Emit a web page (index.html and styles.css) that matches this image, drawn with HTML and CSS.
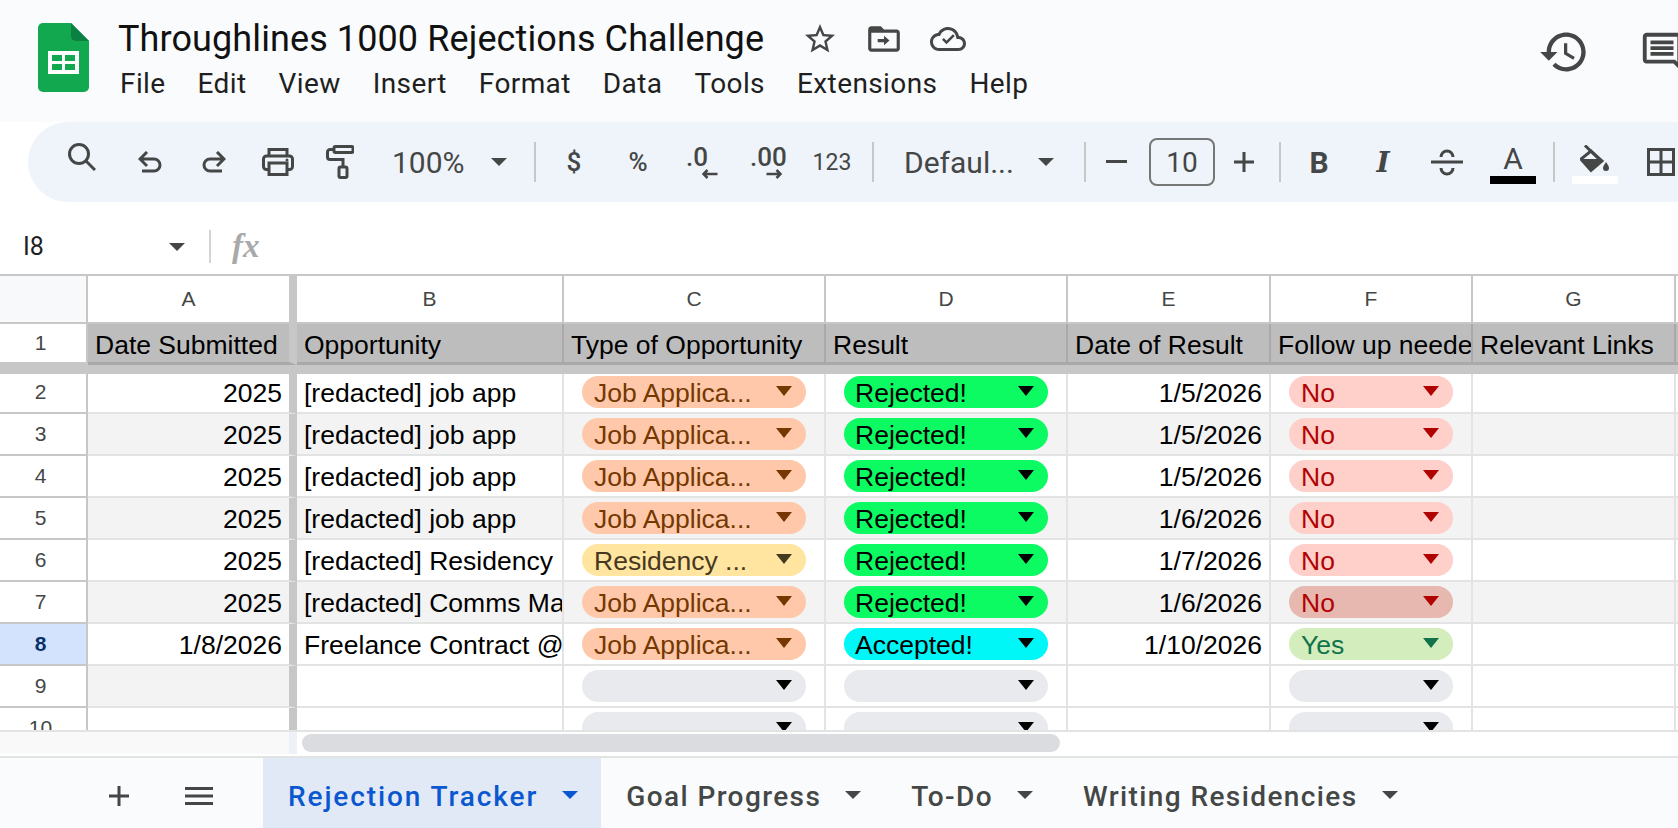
FILE: index.html
```html
<!DOCTYPE html>
<html lang="en">
<head>
    <meta charset="UTF-8">
    <title>Throughlines 1000 Rejections Challenge</title>
    <link rel="stylesheet" href="styles.css">
</head>
<body>
    <header class="topbar">
        <svg class="logo" viewBox="0 0 51 69">
            <path d="M5 0H33L51 18V64a5 5 0 0 1-5 5H5a5 5 0 0 1-5-5V5a5 5 0 0 1 5-5z" fill="#12a84f"/>
            <path d="M33 0V13a5 5 0 0 0 5 5H51z" fill="#0b8043"/>
            <path d="M10 28H41V51H10z" fill="#fff"/>
            <path d="M14 32H24V38H14zM27 32H37V38H27zM14 41H24V47H14zM27 41H37V47H27z" fill="#12a84f"/>
        </svg>
        <div class="doc">
            <div class="doc-title">
                <h1>Throughlines 1000 Rejections Challenge</h1>
                <svg class="star" viewBox="0 0 24 24"><path d="M22 9.24l-7.19-.62L12 2 9.19 8.63 2 9.24l5.46 4.73L5.82 21 12 17.27 18.18 21l-1.63-7.03L22 9.24zM12 15.4l-3.76 2.27 1-4.28-3.32-2.88 4.38-.38L12 6.1l1.71 4.04 4.38.38-3.32 2.88 1 4.28L12 15.4z"/></svg>
                <svg class="move" viewBox="0 0 24 24"><path d="M20 6h-8l-2-2H4c-1.1 0-2 .9-2 2v12c0 1.1.9 2 2 2h16c1.1 0 2-.9 2-2V8c0-1.1-.9-2-2-2zm0 12H4V8h16v10zm-8-2v-2H8v-2h4v-2l3.5 3z"/></svg>
                <svg class="cloud" viewBox="0 0 24 24"><path d="M19.35 10.04C18.67 6.59 15.64 4 12 4 9.11 4 6.6 5.64 5.35 8.04 2.34 8.36 0 10.91 0 14c0 3.31 2.69 6 6 6h13c2.76 0 5-2.24 5-5 0-2.64-2.05-4.78-4.65-4.96zM19 18H6c-2.21 0-4-1.79-4-4 0-2.05 1.53-3.76 3.56-3.97l1.07-.11.5-.95C8.08 7.14 9.94 6 12 6c2.62 0 4.88 1.86 5.39 4.43l.3 1.5 1.53.11c1.56.1 2.78 1.41 2.78 2.96 0 1.65-1.35 3-3 3zm-8-2.5l-3-3 1.2-1.2 1.8 1.8 4.3-4.3 1.2 1.2z"/></svg>
            </div>
            <nav class="menu">
                <span>File</span><span>Edit</span><span>View</span><span>Insert</span><span>Format</span><span>Data</span><span>Tools</span><span>Extensions</span><span>Help</span>
            </nav>
        </div>
        <div class="actions">
            <svg class="history" viewBox="0 0 24 24"><path d="M13 3c-4.97 0-9 4.03-9 9H1l3.89 3.89.07.14L9 12H6c0-3.87 3.13-7 7-7s7 3.13 7 7-3.13 7-7 7c-1.93 0-3.68-.79-4.94-2.06l-1.42 1.42C8.27 19.99 10.51 21 13 21c4.97 0 9-4.03 9-9s-4.03-9-9-9zm-1 5v5l4.28 2.54.72-1.21-3.5-2.08V8H12z"/></svg>
            <svg class="comment" viewBox="0 0 24 24"><path d="M21.99 4c0-1.1-.89-2-1.99-2H4c-1.1 0-2 .9-2 2v12c0 1.1.9 2 2 2h14l4 4-.01-18zM20 4v13.17L18.83 16H4V4h16zM6 12h12v2H6zm0-3h12v2H6zm0-3h12v2H6z"/></svg>
        </div>
    </header>

    <div class="toolbar">
        <span class="tool tool-search">
            <svg width="28" height="28" viewBox="0 0 28 28" class="line"><circle cx="11" cy="11" r="9.5"/><path d="M18 18L27 27"/></svg>
        </span>
        <span class="tool">
            <svg width="24" height="22" viewBox="0 0 24 22" class="line"><path d="M9 1L2 8L9 15M2 8H16a6 6 0 0 1 0 12H4"/></svg>
        </span>
        <span class="tool">
            <svg width="24" height="22" viewBox="0 0 24 22" class="line"><path d="M15 1L22 8L15 15M22 8H8a6 6 0 0 0 0 12H20"/></svg>
        </span>
        <span class="tool">
            <svg width="32" height="28" viewBox="0 0 32 28" class="line"><path d="M7 8V1.500H25V8"/><path d="M7 21.500H4.500a3 3 0 0 1-3-3V11a3 3 0 0 1 3-3H27.500a3 3 0 0 1 3 3V18.500a3 3 0 0 1-3 3H25"/><path d="M7 15H25V26.500H7z"/><circle class="dot" cx="25" cy="12" r="1.500"/></svg>
        </span>
        <span class="tool tool-roller">
            <svg width="28" height="34" viewBox="0 0 28 34" class="line"><rect x="8" y="1.500" width="19" height="6" rx="1.500"/><path d="M8 4.500H4a2.500 2.500 0 0 0-2.500 2.500V12a2.500 2.500 0 0 0 2.500 2.500H17V22"/><rect x="13" y="22" width="8" height="10.500" rx="1.500"/></svg>
        </span>
        <span class="select select-zoom"><span>100%</span><i class="caret"></i></span>
        <i class="divider"></i>
        <span class="tool tool-text">$</span>
        <span class="tool tool-text">%</span>
        <span class="tool">
            <span class="decimal">
                <b>.0</b>
                <svg width="16" height="10" viewBox="0 0 16 10" class="line thin"><path d="M5.500 1L1.500 5L5.500 9M1.500 5H15.500"/></svg>
            </span>
        </span>
        <span class="tool">
            <span class="decimal">
                <b>.00</b>
                <svg width="16" height="10" viewBox="0 0 16 10" class="line thin"><path d="M10.500 1L14.500 5L10.500 9M14.500 5H.5"/></svg>
            </span>
        </span>
        <span class="tool tool-num">123</span>
        <i class="divider"></i>
        <span class="select select-font"><span>Defaul...</span><i class="caret"></i></span>
        <i class="divider divider-flush"></i>
        <span class="tool tool-step">
            <svg width="21" height="4" viewBox="0 0 21 4"><path d="M0 0H21V3H0z" fill="#444746"/></svg>
        </span>
        <span class="size-box">10</span>
        <span class="tool tool-step tool-plus">
            <svg width="20" height="20" viewBox="0 0 20 20"><path d="M0 8.500H20V11.500H0zM8.500 0H11.500V20H8.500z" fill="#444746"/></svg>
        </span>
        <i class="divider"></i>
        <span class="tool tool-bold">B</span>
        <span class="tool tool-italic">I</span>
        <span class="tool">
            <svg width="32" height="30" viewBox="0 0 32 30" class="line"><path d="M0 15H32"/><path d="M10 10a6 6 0 0 1 12 0M10 21a6 6 0 0 0 12 0"/></svg>
        </span>
        <span class="tool tool-swatch">
            <span class="letter">A</span><i class="swatch swatch-black"></i>
        </span>
        <i class="divider"></i>
        <span class="tool tool-swatch tool-fill">
            <svg width="30" height="29" viewBox="0 0 30 29"><path d="M5 0.500L22 17" stroke="#444746" stroke-width="3" fill="none"/><path d="M11 6L22 16L11 25.500L1 14z" stroke="#444746" stroke-width="3" fill="none"/><path d="M1 14H22L11 25.500z" fill="#444746"/><path d="M26 17q3 4 3 6a3 3 0 0 1-6 0q0-2 3-6z" fill="#444746"/></svg>
            <i class="swatch swatch-white"></i>
        </span>
        <span class="tool">
            <svg width="28" height="28" viewBox="0 0 28 28" class="line"><path d="M1.500 1.500H26.500V26.500H1.500zM14 1.500V26.500M1.500 14H26.500"/></svg>
        </span>
    </div>

    <div class="formula">
        <span class="cell-ref">I8</span>
        <i class="caret"></i>
        <i class="formula-divider"></i>
        <span class="fx">fx</span>
    </div>

    <main class="sheet">
        <div class="row row-cols">
            <div class="cell head corner"></div>
            <div class="cell head col-a">A</div>
            <div class="cell head">B</div>
            <div class="cell head">C</div>
            <div class="cell head">D</div>
            <div class="cell head">E</div>
            <div class="cell head">F</div>
            <div class="cell head">G</div>
            <div class="cell head"></div>
        </div>
        <div class="row row-title">
            <div class="cell num">1</div>
            <div class="cell col-a">Date Submitted</div>
            <div class="cell">Opportunity</div>
            <div class="cell">Type of Opportunity</div>
            <div class="cell">Result</div>
            <div class="cell">Date of Result</div>
            <div class="cell">Follow up neede</div>
            <div class="cell">Relevant Links</div>
            <div class="cell"></div>
        </div>
        <div class="frozen"></div>

        <div class="row">
            <div class="cell num">2</div>
            <div class="cell col-a right">2025</div>
            <div class="cell">[redacted] job app</div>
            <div class="cell"><span class="pill pill-job">Job Applica...<i class="caret"></i></span></div>
            <div class="cell"><span class="pill pill-rejected">Rejected!<i class="caret"></i></span></div>
            <div class="cell right">1/5/2026</div>
            <div class="cell"><span class="pill pill-no">No<i class="caret"></i></span></div>
            <div class="cell"></div>
            <div class="cell"></div>
        </div>
        <div class="row row-alt">
            <div class="cell num">3</div>
            <div class="cell col-a right">2025</div>
            <div class="cell">[redacted] job app</div>
            <div class="cell"><span class="pill pill-job">Job Applica...<i class="caret"></i></span></div>
            <div class="cell"><span class="pill pill-rejected">Rejected!<i class="caret"></i></span></div>
            <div class="cell right">1/5/2026</div>
            <div class="cell"><span class="pill pill-no">No<i class="caret"></i></span></div>
            <div class="cell"></div>
            <div class="cell"></div>
        </div>
        <div class="row">
            <div class="cell num">4</div>
            <div class="cell col-a right">2025</div>
            <div class="cell">[redacted] job app</div>
            <div class="cell"><span class="pill pill-job">Job Applica...<i class="caret"></i></span></div>
            <div class="cell"><span class="pill pill-rejected">Rejected!<i class="caret"></i></span></div>
            <div class="cell right">1/5/2026</div>
            <div class="cell"><span class="pill pill-no">No<i class="caret"></i></span></div>
            <div class="cell"></div>
            <div class="cell"></div>
        </div>
        <div class="row row-alt">
            <div class="cell num">5</div>
            <div class="cell col-a right">2025</div>
            <div class="cell">[redacted] job app</div>
            <div class="cell"><span class="pill pill-job">Job Applica...<i class="caret"></i></span></div>
            <div class="cell"><span class="pill pill-rejected">Rejected!<i class="caret"></i></span></div>
            <div class="cell right">1/6/2026</div>
            <div class="cell"><span class="pill pill-no">No<i class="caret"></i></span></div>
            <div class="cell"></div>
            <div class="cell"></div>
        </div>
        <div class="row">
            <div class="cell num">6</div>
            <div class="cell col-a right">2025</div>
            <div class="cell">[redacted] Residency</div>
            <div class="cell"><span class="pill pill-residency">Residency ...<i class="caret"></i></span></div>
            <div class="cell"><span class="pill pill-rejected">Rejected!<i class="caret"></i></span></div>
            <div class="cell right">1/7/2026</div>
            <div class="cell"><span class="pill pill-no">No<i class="caret"></i></span></div>
            <div class="cell"></div>
            <div class="cell"></div>
        </div>
        <div class="row row-alt">
            <div class="cell num">7</div>
            <div class="cell col-a right">2025</div>
            <div class="cell">[redacted] Comms Ma</div>
            <div class="cell"><span class="pill pill-job">Job Applica...<i class="caret"></i></span></div>
            <div class="cell"><span class="pill pill-rejected">Rejected!<i class="caret"></i></span></div>
            <div class="cell right">1/6/2026</div>
            <div class="cell"><span class="pill pill-no-dark">No<i class="caret"></i></span></div>
            <div class="cell"></div>
            <div class="cell"></div>
        </div>
        <div class="row">
            <div class="cell num num-active">8</div>
            <div class="cell col-a right">1/8/2026</div>
            <div class="cell">Freelance Contract @</div>
            <div class="cell"><span class="pill pill-job">Job Applica...<i class="caret"></i></span></div>
            <div class="cell"><span class="pill pill-accepted">Accepted!<i class="caret"></i></span></div>
            <div class="cell right">1/10/2026</div>
            <div class="cell"><span class="pill pill-yes">Yes<i class="caret"></i></span></div>
            <div class="cell"></div>
            <div class="cell"></div>
        </div>
        <div class="row">
            <div class="cell num">9</div>
            <div class="cell col-a cell-grey"></div>
            <div class="cell"></div>
            <div class="cell"><span class="pill pill-empty"><i class="caret"></i></span></div>
            <div class="cell"><span class="pill pill-empty"><i class="caret"></i></span></div>
            <div class="cell"></div>
            <div class="cell"><span class="pill pill-empty"><i class="caret"></i></span></div>
            <div class="cell"></div>
            <div class="cell"></div>
        </div>
        <div class="row">
            <div class="cell num">10</div>
            <div class="cell col-a"></div>
            <div class="cell"></div>
            <div class="cell"><span class="pill pill-empty"><i class="caret"></i></span></div>
            <div class="cell"><span class="pill pill-empty"><i class="caret"></i></span></div>
            <div class="cell"></div>
            <div class="cell"><span class="pill pill-empty"><i class="caret"></i></span></div>
            <div class="cell"></div>
            <div class="cell"></div>
        </div>
    </main>

    <div class="scroll">
        <div class="scroll-frozen"></div>
        <div class="scroll-thumb"></div>
    </div>

    <footer class="tabs">
        <svg class="tab-add" width="20" height="20" viewBox="0 0 20 20"><path d="M0 8.500H20V11.500H0zM8.500 0H11.500V20H8.500z" fill="#444746"/></svg>
        <svg class="tab-list" width="28" height="18" viewBox="0 0 28 18"><path d="M0 0H28V3H0zM0 7.500H28V10.500H0zM0 15H28V18H0z" fill="#444746"/></svg>
        <div class="tab tab-active"><span>Rejection Tracker</span><i class="caret"></i></div>
        <div class="tab"><span>Goal Progress</span><i class="caret"></i></div>
        <div class="tab"><span>To-Do</span><i class="caret"></i></div>
        <div class="tab"><span>Writing Residencies</span><i class="caret"></i></div>
    </footer>
</body>
</html>
```

FILE: styles.css
```css
body {
    margin: 0;
    width: 1678px;
    height: 828px;
    overflow: hidden;
    background: #fff;
    font-family: 'Roboto', 'Liberation Sans', sans-serif;
    color: #444746;
}

i {
    font-style: normal;
}

svg {
    flex-shrink: 0;
    display: block;
}

.caret {
    display: block;
    flex-shrink: 0;
    width: 0;
    height: 0;
    border-left: 8px solid transparent;
    border-right: 8px solid transparent;
    border-top: 8px solid #444746;
}

/* top bar */
.topbar {
    display: flex;
    height: 122px;
    padding-left: 38px;
    background: #f9fbfd;
}

.logo {
    width: 51px;
    height: 69px;
    margin-top: 23px;
}

.doc {
    margin-left: 29px;
}

.doc-title {
    display: flex;
    align-items: center;
    height: 44px;
    margin-top: 17px;
}

.doc-title h1 {
    margin: 0;
    font-size: 36px;
    font-weight: 400;
    letter-spacing: 0.1px;
    color: #111;
    white-space: nowrap;
}

.doc-title svg {
    fill: #444746;
}

.star {
    width: 36px;
    height: 36px;
    margin-left: 38px;
}

.move {
    width: 38px;
    height: 38px;
    margin-left: 27px;
}

.cloud {
    width: 36px;
    height: 36px;
    margin-left: 27px;
}

.menu {
    display: flex;
    gap: 32px;
    margin-top: 3px;
    margin-left: 2px;
    font-size: 28px;
    letter-spacing: 0.4px;
    line-height: 40px;
    color: #1f1f1f;
}

.actions {
    display: flex;
    margin-left: auto;
    margin-right: -7px;
    fill: #444746;
}

.history {
    width: 52px;
    height: 52px;
    margin-top: 26px;
}

.comment {
    width: 46px;
    height: 46px;
    margin-top: 29px;
    margin-left: 49px;
}

/* toolbar */
.toolbar {
    display: flex;
    align-items: center;
    height: 80px;
    margin-left: 28px;
    padding-left: 22px;
    border-radius: 40px 0 0 40px;
    background: #eff3fa;
    font-size: 28px;
}

.tool {
    display: flex;
    flex-shrink: 0;
    align-items: center;
    justify-content: center;
    width: 64px;
    height: 60px;
}

.tool-search {
    margin-right: 4px;
    padding-bottom: 10px;
    box-sizing: border-box;
}

.tool-roller {
    margin-left: -2px;
}

.line {
    fill: none;
    stroke: #444746;
    stroke-width: 3;
}

.line.thin {
    stroke-width: 2.500;
}

.line .dot {
    fill: #444746;
    stroke: none;
}

.select {
    display: flex;
    align-items: center;
    flex-shrink: 0;
    font-size: 30px;
    color: #444746;
    white-space: nowrap;
}

.select-zoom {
    justify-content: space-between;
    width: 115px;
    margin-left: 20px;
    margin-right: 21px;
}

.select-font {
    justify-content: space-between;
    width: 150px;
    margin-left: 24px;
    margin-right: 30px;
}

.divider {
    display: block;
    flex-shrink: 0;
    width: 2px;
    height: 40px;
    margin: 0 6px;
    background: #c7c7c7;
}

.divider-flush {
    margin: 0;
}

.tool-text {
    font-size: 26px;
    font-weight: 500;
}

.decimal {
    display: flex;
    flex-direction: column;
    align-items: flex-end;
    width: 32px;
}

.decimal b {
    align-self: flex-start;
    font-size: 26px;
    font-weight: 500;
    line-height: 24px;
}

.tool-num {
    width: 68px;
    font-size: 23px;
}

.tool-step {
    width: 60px;
}

.tool-plus {
    width: 58px;
}

.size-box {
    display: flex;
    flex-shrink: 0;
    align-items: center;
    justify-content: center;
    box-sizing: border-box;
    width: 66px;
    height: 48px;
    margin-left: 3px;
    border: 2px solid #747775;
    border-radius: 8px;
}

.tool-bold {
    font-size: 30px;
    font-weight: 700;
}

.tool-italic {
    font-family: 'DejaVu Serif', serif;
    font-size: 28px;
    font-style: italic;
    font-weight: 700;
}

.tool-swatch {
    flex-direction: column;
    justify-content: flex-end;
    width: 68px;
    height: 60px;
}

.letter {
    font-size: 30px;
    line-height: 30px;
}

.swatch {
    display: block;
    width: 46px;
    height: 8px;
    margin-top: 2px;
    margin-bottom: 8px;
}

.swatch-black {
    background: #000;
}

.swatch-white {
    background: #fff;
}

/* name box and formula */
.formula {
    display: flex;
    align-items: center;
    height: 56px;
    margin-top: 16px;
    padding-left: 23px;
    background: #fff;
}

.cell-ref {
    width: 146px;
    font-size: 25px;
    color: #1f1f1f;
}

.formula .caret {
    margin-top: 2px;
}

.formula-divider {
    display: block;
    width: 2px;
    height: 33px;
    margin-left: 24px;
    background: #d4d4d4;
}

.fx {
    margin-left: 21px;
    font-family: 'Liberation Serif', serif;
    font-size: 33px;
    font-style: italic;
    font-weight: 700;
    color: #a9a9a9;
}

/* grid */
.sheet {
    height: 454px;
    overflow: hidden;
    border-top: 2px solid #c7c7c7;
    font-family: 'Liberation Sans', Arial, sans-serif;
    font-size: 26.500px;
    color: #000;
}

.row {
    display: grid;
    grid-template-columns: 88px 209px 267px 262px 242px 203px 202px 203px 2px;
    height: 42px;
}

.cell {
    display: flex;
    align-items: center;
    box-sizing: border-box;
    padding: 2px 7px 0;
    overflow: hidden;
    white-space: nowrap;
    border-right: 2px solid #e2e3e3;
    border-bottom: 2px solid #e2e3e3;
}

.right {
    justify-content: flex-end;
}

.col-a {
    border-right: 8px solid #c7c7c7;
}

.row-cols {
    height: 48px;
}

.head {
    justify-content: center;
    padding-top: 0;
    font-size: 21px;
    color: #444746;
    border-right-color: #c7c7c7;
    border-bottom-color: #c7c7c7;
}

.corner {
    background: #f8f9fa;
}

.row-title {
    height: 41px;
}

.row-title .cell {
    padding-top: 4px;
    background: #bdbdbd;
    border-right-color: #a9a9a9;
    border-bottom: 3px solid #a9a9a9;
}

.row-title .col-a {
    border-right: 8px solid #c7c7c7;
}

.row-title .num,
.num {
    justify-content: center;
    padding: 0 5px 0 0;
    background: #fff;
    font-size: 21px;
    color: #444746;
    border-right-color: #c7c7c7;
    border-bottom-color: #c7c7c7;
}

.num-active {
    background: #d3e3fd;
    font-weight: 700;
    color: #0b2f6b;
}

.frozen {
    position: relative;
    z-index: 1;
    height: 9px;
    margin-bottom: -2px;
    background: #c7c7c7;
}

.row-alt .cell:not(.num) {
    background: #f3f3f3;
}

.cell-grey {
    background: #f3f3f3;
}

.pill {
    display: flex;
    align-items: center;
    box-sizing: border-box;
    flex-shrink: 0;
    width: 224px;
    height: 32px;
    margin-top: -2px;
    margin-left: 11px;
    padding: 2px 14px 0 12px;
    border-radius: 16px;
}

.pill .caret {
    margin-left: auto;
    margin-top: -4px;
    border-top: 10px solid #000;
}

.pill-job {
    background: #ffc8aa;
    color: #753800;
}

.pill-job .caret {
    border-top-color: #753800;
}

.pill-residency {
    background: #ffe5a0;
    color: #473821;
}

.pill-residency .caret {
    border-top-color: #473821;
}

.cell:nth-child(5) .pill {
    width: 204px;
    padding-left: 11px;
}

.cell:nth-child(7) .pill {
    width: 164px;
}

.pill-rejected {
    background: #0dfb62;
}

.pill-accepted {
    background: #00f7f7;
}

.pill-no {
    background: #ffcfc9;
    color: #b10202;
}

.pill-no-dark {
    background: #e6b8af;
    color: #b10202;
}

.pill-no .caret,
.pill-no-dark .caret {
    border-top-color: #b10202;
}

.pill-yes {
    background: #d4edbc;
    color: #11734b;
}

.pill-yes .caret {
    border-top-color: #11734b;
}

.pill-empty {
    background: #e8eaed;
}

/* bottom */
.scroll {
    display: flex;
    height: 24px;
    border-top: 2px solid #e2e3e3;
    border-bottom: 2px solid #e2e3e3;
}

.scroll-frozen {
    width: 289px;
    height: 22px;
    background: #f9f9f9;
    border-right: 8px solid #eef2f8;
}

.scroll-thumb {
    width: 758px;
    height: 18px;
    margin-top: 2px;
    margin-left: 5px;
    border-radius: 9px;
    background: #dadce0;
}

.tabs {
    display: flex;
    align-items: stretch;
    height: 70px;
    background: #f9fbfd;
}

.tab-add {
    margin-top: 28px;
    margin-left: 109px;
}

.tab-list {
    margin-top: 29px;
    margin-left: 56px;
}

.tab {
    display: flex;
    align-items: center;
    gap: 24px;
    padding: 6px 25px 0;
    font-size: 28px;
    font-weight: 500;
    letter-spacing: 1.400px;
    white-space: nowrap;
}

.tab .caret {
    margin-top: -2px;
}

.tab-list + .tab {
    margin-left: 50px;
    padding-right: 23px;
}

.tab-active {
    background: #e1e9f7;
    color: #0b57d0;
    letter-spacing: 1.900px;
}

.tab-active .caret {
    border-top-color: #0b57d0;
}
```
